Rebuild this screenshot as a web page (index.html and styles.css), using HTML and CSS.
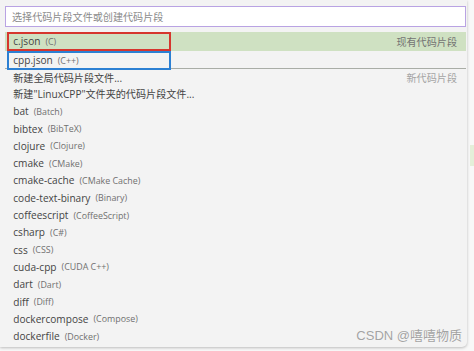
FILE: index.html
```html
<!DOCTYPE html>
<html>
<head>
  <title>代码片段</title>
  <link rel="stylesheet" href="styles.css">
</head>
<body>
  <div class="screen">
    <div class="picker">
      <div class="search">选择代码片段文件或创建代码片段</div>
      <ul class="list">
        <li class="row active"><span class="name red">c.json<span class="desc">(C)</span></span><span class="group">现有代码片段</span></li>
        <li class="row"><span class="name blue">cpp.json<span class="desc">(C++)</span></span></li>
        <li class="row first-new"><span class="name">新建全局代码片段文件...</span><span class="group muted">新代码片段</span></li>
        <li class="row"><span class="name">新建"LinuxCPP"文件夹的代码片段文件...</span></li>
        <li class="row"><span class="name">bat<span class="desc">(Batch)</span></span></li>
        <li class="row"><span class="name">bibtex<span class="desc">(BibTeX)</span></span></li>
        <li class="row"><span class="name">clojure<span class="desc">(Clojure)</span></span></li>
        <li class="row"><span class="name">cmake<span class="desc">(CMake)</span></span></li>
        <li class="row"><span class="name">cmake-cache<span class="desc">(CMake Cache)</span></span></li>
        <li class="row"><span class="name">code-text-binary<span class="desc">(Binary)</span></span></li>
        <li class="row"><span class="name">coffeescript<span class="desc">(CoffeeScript)</span></span></li>
        <li class="row"><span class="name">csharp<span class="desc">(C#)</span></span></li>
        <li class="row"><span class="name">css<span class="desc">(CSS)</span></span></li>
        <li class="row"><span class="name">cuda-cpp<span class="desc">(CUDA C++)</span></span></li>
        <li class="row"><span class="name">dart<span class="desc">(Dart)</span></span></li>
        <li class="row"><span class="name">diff<span class="desc">(Diff)</span></span></li>
        <li class="row"><span class="name">dockercompose<span class="desc">(Compose)</span></span></li>
        <li class="row"><span class="name">dockerfile<span class="desc">(Docker)</span></span></li>
      </ul>
    </div>
    <div class="gutter"><div class="gutter-mark"></div></div>
    <div class="watermark">CSDN @嘻嘻物质</div>
  </div>
</body>
</html>
```
FILE: styles.css
```css
body {
  margin: 0;
  background: #f8f8f8;
  font-family: "Open Sans", "Noto Sans CJK SC", sans-serif;
}

.screen {
  position: relative;
  display: flex;
  width: 474px;
  height: 351px;
  overflow: hidden;
}

.picker {
  width: 467px;
  height: 347px;
  flex: 0 0 467px;
  box-sizing: border-box;
  padding: 6px 1px 0 5px;
  background: #f3f3f3;
  box-shadow: 0 1px 3px rgba(0, 0, 0, 0.25);
  border-bottom-right-radius: 5px;
  overflow: hidden;
}

.search {
  height: 21px;
  box-sizing: border-box;
  border: 1px solid #b9a3e3;
  background: #fff;
  padding-left: 6px;
  font-size: 10.1px;
  line-height: 20px;
  color: #8b8b8b;
}

.list {
  list-style: none;
  margin: 5.3px 0 0;
  padding: 0;
}

.row {
  display: flex;
  align-items: center;
  height: 17.3px;
  box-sizing: border-box;
  padding: 0 9px 0 1.7px;
  font-size: 10.1px;
  color: #444;
  white-space: nowrap;
}

.row.active {
  height: 18.4px;
  background: #cfe1c2;
}

.row.first-new {
  border-top: 1px solid #a9ada6;
}

.name {
  display: flex;
  align-items: center;
  align-self: stretch;
  box-sizing: border-box;
  border: 2px solid transparent;
  padding-left: 4.6px;
}

.name.red {
  width: 164px;
  border-color: #d6362e;
}

.name.blue {
  position: relative;
  z-index: 1;
  width: 164px;
  height: 19.6px;
  align-self: flex-start;
  border-color: #2c80d3;
}

.desc {
  margin-left: 5px;
  font-size: 8.9px;
  color: #707070;
}

.group {
  margin-left: auto;
  color: #737373;
}

.group.muted {
  color: #a4a4a4;
}

.gutter {
  flex: 1;
}

.gutter-mark {
  margin: 145px 0 0 3px;
  height: 21px;
  background: #e4efd9;
}

.watermark {
  position: absolute;
  right: 12px;
  bottom: 7px;
  font-family: "Liberation Sans", "Noto Sans CJK SC", sans-serif;
  font-size: 13px;
  color: #a3a3a3;
  text-shadow: 0 0 1px #fff;
}
```
